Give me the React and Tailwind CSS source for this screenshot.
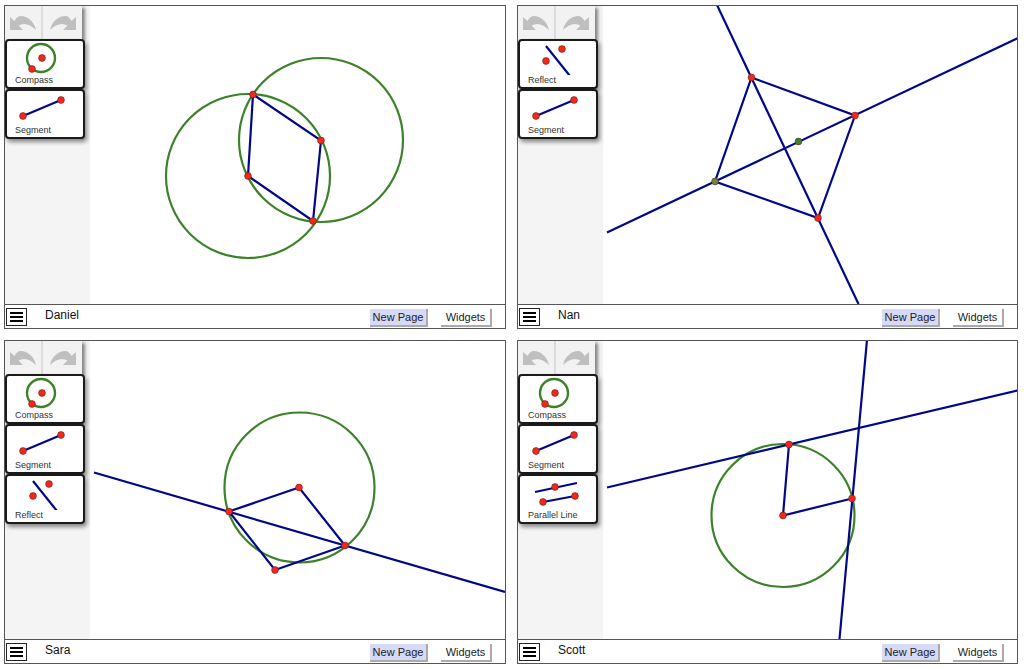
const FONT = 'font-["Liberation_Sans",Arial,sans-serif]';
const BLUE = '#00088a';
const GREEN = '#3c8228';
const RED = '#ee2a1e';

function Dot({ x, y, r = 3.4, fill = RED }) {
  return <circle cx={x} cy={y} r={r} fill={fill} stroke="#7a1a10" strokeWidth="0.6" />;
}

function Tool({ label, children }) {
  return (
    <div className="w-[80px] h-[50px] rounded-[4px] border-2 border-[#1a1a1a] bg-white shadow-[2px_3px_4px_rgba(0,0,0,0.45)] flex flex-col overflow-hidden">
      <svg width="76" height="34" viewBox="1 2 76 34" className="shrink-0">{children}</svg>
      <span className="pl-[8px] text-[9px] leading-[11px] text-[#333] whitespace-nowrap">{label}</span>
    </div>
  );
}

const Compass = () => (
  <Tool label="Compass">
    <circle cx="35" cy="19" r="14" fill="none" stroke={GREEN} strokeWidth="2.4" />
    <Dot x={36} y={19} />
    <Dot x={26} y={30} />
  </Tool>
);
const Segment = () => (
  <Tool label="Segment">
    <line x1="17" y1="27" x2="55" y2="11" stroke={BLUE} strokeWidth="2.2" />
    <Dot x={17} y={27} />
    <Dot x={55} y={11} />
  </Tool>
);
const Reflect = () => (
  <Tool label="Reflect">
    <line x1="27" y1="7" x2="51" y2="37" stroke={BLUE} strokeWidth="2.2" />
    <Dot x={43} y={10} />
    <Dot x={27} y={22} />
  </Tool>
);
const Parallel = () => (
  <Tool label="Parallel Line">
    <line x1="16" y1="18" x2="58" y2="9" stroke={BLUE} strokeWidth="2.2" />
    <line x1="24" y1="28" x2="56" y2="22" stroke={BLUE} strokeWidth="2.2" />
    <Dot x={36} y={13} />
    <Dot x={24} y={28} />
    <Dot x={56} y={22} />
  </Tool>
);

function Arrow({ flip }) {
  return (
    <svg width="28" height="16" viewBox="0 0 28 16" style={flip ? { transform: 'scaleX(-1)' } : undefined}>
      <path d="M1 2 L1 15 L14 15 L9.5 10.5 C15 7.5 21 9 27 15 C25 6 18 1 12 1 C9 1 7 3 5.5 6 Z" fill="#bfbfbf" />
    </svg>
  );
}

function Undo() {
  return (
    <div className="w-[77px] h-[33px] flex bg-[#f2f2f2] shadow-[3px_2px_3px_rgba(0,0,0,0.45)]">
      <div className="w-[38px] flex items-center justify-center border-r-2 border-[#dcdcdc]">
        <Arrow />
      </div>
      <div className="flex-1 flex items-center justify-center">
        <Arrow flip />
      </div>
    </div>
  );
}

function Menu() {
  return (
    <div className="w-[21px] h-[18px] border border-[#222] flex flex-col justify-center gap-[2px] px-[3px] bg-white">
      <div className="h-[2px] bg-black" />
      <div className="h-[2px] bg-black" />
      <div className="h-[2px] bg-black" />
    </div>
  );
}

function Panel({ name, tools, ox, oy, children }) {
  return (
    <div className="h-[324px] border border-[#555] bg-white flex flex-col">
      <div className="flex-1 relative overflow-hidden">
        <div className="relative w-[85px] h-full bg-[#f4f4f4] flex flex-col">
          <Undo />
          <div className="flex flex-col">{tools}</div>
        </div>
        <svg className="absolute inset-0 pointer-events-none" width="500" height="298" viewBox={`${ox} ${oy} 500 298`}>
          {children}
        </svg>
      </div>
      <div className="h-[24px] shrink-0 border-t border-[#555] flex items-center pl-px pr-[13px]">
        <Menu />
        <span className="ml-[18px] -mt-[3px] text-[12px] text-[#111]">{name}</span>
        <div className="ml-auto flex gap-[13px] items-center mt-[2px]">
          <button className="w-[58px] h-[18px] pt-px bg-[#d6d9f7] border-r-2 border-b-2 border-[#aaa] text-[11px] text-[#222] leading-none">New Page</button>
          <button className="w-[51px] h-[18px] pt-px bg-white border-r-2 border-b-2 border-[#aaa] text-[11px] text-[#222] leading-none">Widgets</button>
        </div>
      </div>
    </div>
  );
}

const G = ({ children }) => <g fill="none" stroke={BLUE} strokeWidth="2.2">{children}</g>;
const C = ({ x, y, r }) => <circle cx={x} cy={y} r={r} fill="none" stroke={GREEN} strokeWidth="2.2" />;

export default function App() {
  return (
    <div className={`w-[1024px] h-[670px] bg-white overflow-hidden pl-[4px] pt-[5px] ${FONT}`}>
      <div className="grid grid-cols-[502px_501px] gap-x-[11px] gap-y-[11px]">
        <Panel name="Daniel" ox={5} oy={6} tools={<><Compass /><Segment /></>}>
          <C x={321} y={140} r={82} />
          <C x={248} y={176} r={82} />
          <G><polygon points="253,94.5 321,140.5 313,221 248,176" /></G>
          <Dot x={253} y={94.5} /><Dot x={321} y={140.5} /><Dot x={313} y={221} /><Dot x={248} y={176} />
        </Panel>
        <Panel name="Nan" ox={518} oy={6} tools={<><Reflect /><Segment /></>}>
          <G>
            <line x1="717" y1="5" x2="858.5" y2="304" />
            <line x1="607" y1="232.5" x2="1018" y2="38" />
            <polygon points="751.5,77.5 855,115.5 818,218 715,181.5" />
          </G>
          <Dot x={751.5} y={77.5} /><Dot x={855} y={115.5} /><Dot x={818} y={218} />
          <Dot x={715} y={181.5} fill="#5f8a3a" /><Dot x={798.5} y={141.5} fill="#3c8228" />
        </Panel>
        <Panel name="Sara" ox={5} oy={341} tools={<><Compass /><Segment /><Reflect /></>}>
          <C x={299.5} y={487.5} r={75} />
          <G>
            <line x1="94" y1="472.5" x2="505" y2="592" />
            <polygon points="229,511.5 299,487.5 345,545.5 275,570" />
          </G>
          <Dot x={229} y={511.5} /><Dot x={299} y={487.5} /><Dot x={345} y={545.5} /><Dot x={275} y={570} />
        </Panel>
        <Panel name="Scott" ox={518} oy={341} tools={<><Compass /><Segment /><Parallel /></>}>
          <C x={783} y={515.5} r={71.5} />
          <G>
            <line x1="607" y1="487.5" x2="1018" y2="390.5" />
            <line x1="867" y1="340" x2="839.5" y2="639" />
            <polyline points="789,444.5 783,515.5 852,498.5" />
          </G>
          <Dot x={789} y={444.5} /><Dot x={783} y={515.5} /><Dot x={852} y={498.5} />
        </Panel>
      </div>
    </div>
  );
}
